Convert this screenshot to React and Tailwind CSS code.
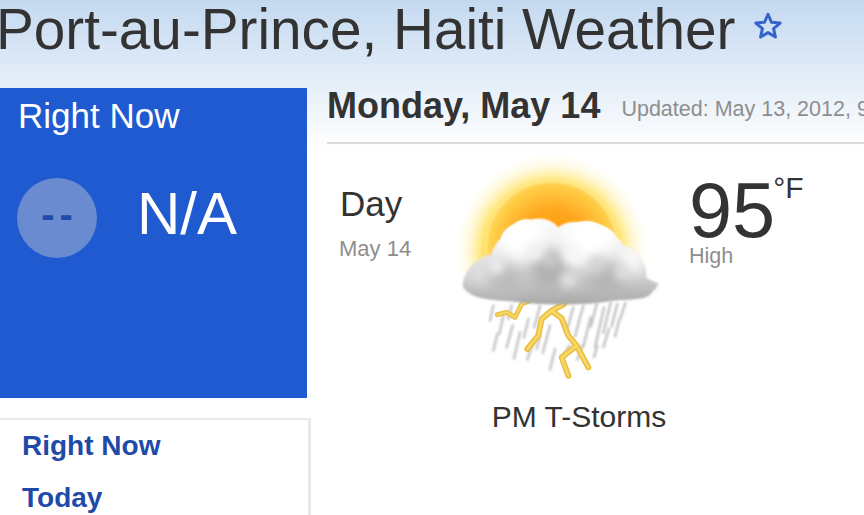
const rain = [
  [160, 470, 150, 515], [190, 500, 178, 555], [215, 470, 205, 510], [218, 530, 200, 595], [172, 555, 160, 605],
  [240, 550, 222, 628], [265, 510, 252, 565], [300, 470, 283, 535], [278, 585, 262, 632], [330, 530, 308, 612],
  [345, 600, 330, 662], [400, 475, 383, 535], [430, 470, 405, 562], [452, 505, 430, 592], [470, 465, 453, 532],
  [492, 475, 465, 595], [512, 460, 490, 552], [532, 465, 515, 532], [507, 540, 490, 594], [556, 462, 540, 512],
  [427, 590, 412, 632], [472, 590, 462, 624], [537, 515, 525, 562], [388, 590, 375, 612], [300, 560, 290, 600],
]

const softPuffs = [
  [240, 262, 70, '#ffffff'], [450, 268, 75, '#ffffff'], [330, 362, 60, '#b0b0b0'], [190, 395, 55, '#bcbcbc'],
  [500, 390, 58, '#b6b6b6'], [575, 335, 36, '#ffffff'], [120, 375, 30, '#e6e6e6'], [340, 258, 34, '#f4f4f4'],
]

const detailPuffs = [
  [400, 318, 32, '#f6f6f6'], [285, 305, 28, '#f2f2f2'], [385, 392, 24, '#e2e2e2'], [170, 350, 24, '#efefef'],
  [470, 345, 26, '#d4d4d4'], [545, 372, 22, '#dedede'], [330, 335, 22, '#cccccc'],
]

function StormIcon() {
  const cloud = 'M68 410 C70 385 88 345 118 332 Q135 318 152 318 C160 300 168 280 182 270 Q190 240 222 226 Q240 208 275 212 Q310 204 340 222 Q348 228 354 236 Q375 218 415 220 Q450 210 482 228 Q520 240 532 268 Q545 275 552 290 Q585 298 598 322 Q618 345 620 388 Q640 398 656 404 Q648 420 636 430 C625 455 570 450 510 456 C440 470 300 470 215 457 C160 452 85 452 68 410 Z'
  const mainBolt = 'M372 465 L335 485 L305 510 L295 560 L262 600 M335 485 L365 508 L385 560 L410 590 L365 625 L385 680 M410 590 L445 655'
  const leftBolt = 'M282 450 L245 465 L225 505 L200 490 L172 497'
  return (
    <svg width="240" height="240" viewBox="0 0 720 720">
      <defs>
        <radialGradient id="glow" gradientUnits="userSpaceOnUse" cx="335" cy="305" r="292">
          <stop offset="0.66" stopColor="#ffd63c" />
          <stop offset="0.76" stopColor="#ffe778" stopOpacity="0.75" />
          <stop offset="0.88" stopColor="#fff3b8" stopOpacity="0.38" />
          <stop offset="1" stopColor="#fff8d8" stopOpacity="0" />
        </radialGradient>
        <radialGradient id="sun" gradientUnits="userSpaceOnUse" cx="340" cy="290" r="215">
          <stop offset="0" stopColor="#ff9400" />
          <stop offset="0.5" stopColor="#ffa820" />
          <stop offset="0.85" stopColor="#ffcf48" />
          <stop offset="1" stopColor="#ffe070" />
        </radialGradient>
        <linearGradient id="cloudFill" x1="0" y1="0" x2="0" y2="1">
          <stop offset="0" stopColor="#ffffff" />
          <stop offset="0.45" stopColor="#e6e6e6" />
          <stop offset="0.8" stopColor="#c0c0c0" />
          <stop offset="1" stopColor="#a8a8a8" />
        </linearGradient>
        <filter id="soft"><feGaussianBlur stdDeviation="2.5" /></filter>
        <filter id="boltBlur"><feGaussianBlur stdDeviation="1.2" /></filter>
        <filter id="puff"><feGaussianBlur stdDeviation="22" /></filter>
        <filter id="detail"><feGaussianBlur stdDeviation="13" /></filter>
        <clipPath id="cloudClip"><path d={cloud} /></clipPath>
        <clipPath id="aboveCloud"><rect x="0" y="0" width="720" height="425" /></clipPath>
      </defs>
      <g clipPath="url(#aboveCloud)">
        <circle cx="335" cy="305" r="292" fill="url(#glow)" />
        <circle cx="335" cy="295" r="197" fill="url(#sun)" stroke="#fff0a8" strokeWidth="4" filter="url(#soft)" />
      </g>
      <g stroke="#c8c8c8" strokeWidth="8" strokeLinecap="round" filter="url(#soft)">
        {rain.map((r, i) => <line key={i} x1={r[0]} y1={r[1]} x2={r[2]} y2={r[3]} />)}
      </g>
      <g fill="none" strokeLinejoin="round" strokeLinecap="round" filter="url(#boltBlur)">
        <path d={mainBolt} stroke="#eabf42" strokeWidth="18" />
        <path d={leftBolt} stroke="#eabf42" strokeWidth="15" />
        <path d={mainBolt} stroke="#f6d768" strokeWidth="8" />
        <path d={leftBolt} stroke="#f6d768" strokeWidth="6" />
      </g>
      <path d={cloud} fill="url(#cloudFill)" filter="url(#soft)" />
      <g clipPath="url(#cloudClip)">
        <g filter="url(#puff)">
          {softPuffs.map((p, i) => <circle key={i} cx={p[0]} cy={p[1]} r={p[2]} fill={p[3]} />)}
        </g>
        <g filter="url(#detail)">
          {detailPuffs.map((p, i) => <circle key={i} cx={p[0]} cy={p[1]} r={p[2]} fill={p[3]} />)}
        </g>
      </g>
    </svg>
  )
}

export default function App() {
  return (
    <div className="w-[864px] h-[515px] overflow-hidden bg-linear-to-b from-[#c4d9f0] to-white to-[150px] font-['Liberation_Sans',Arial,sans-serif] text-[#333333]">

      {/* Title */}
      <div className="h-[88px] flex items-start whitespace-nowrap">
        <h1 className="text-[56.7px] leading-[60px] -ml-[4px]">Port-au-Prince, Haiti Weather</h1>
        <svg className="ml-[17px] mt-[10px]" width="32" height="32" viewBox="0 0 30 30">
          <polygon
            points="15,4 18.2,11.4 26.4,12.2 20.2,17.5 22,25.4 15,21.2 8,25.4 9.8,17.5 3.6,12.2 11.8,11.4"
            fill="none"
            stroke="#3565cc"
            strokeWidth="2.8"
            strokeLinejoin="round"
          />
        </svg>
      </div>

      <div className="flex">
        {/* Left column */}
        <div className="w-[311px] shrink-0">
          <div className="w-[307px] h-[310px] bg-[#1f5ad0] text-white pl-[18px] pt-[8px]">
            <div className="text-[35px] leading-[40px]">Right Now</div>
            <div className="flex items-center mt-[42px] -ml-[1px]">
              <div className="w-[80px] h-[80px] rounded-full bg-[#6a8bd0] flex items-center justify-center text-[#1e4ca8] text-[40px] font-bold tracking-[5px] leading-none pb-[8px] pl-[5px]">
                --
              </div>
              <div className="ml-[40px] text-[60px] leading-[72px] mb-[8px]">N/A</div>
            </div>
          </div>
          <div className="mt-[20px] h-[120px] border-t-[2px] border-r-[3px] border-[#e9e9e9] pl-[22px] pt-[11px] font-bold text-[28px] text-[#1f4aa8]">
            <div className="leading-[30px]">Right Now</div>
            <div className="leading-[30px] mt-[22px]">Today</div>
          </div>
        </div>

        {/* Forecast */}
        <div className="ml-[16px] flex-1 min-w-0">
          <div className="h-[56px] border-b-[2px] border-[#d9d9d9] flex items-baseline whitespace-nowrap overflow-hidden">
            <span className="font-bold text-[36px] leading-[36px]">Monday, May 14</span>
            <span className="ml-[21px] text-[21.5px] text-[#8e8e8e] -translate-y-[2px]">Updated: May 13, 2012, 9</span>
          </div>
          <div className="flex pt-[5px]">
            <div className="w-[113px] pl-[13px] shrink-0 pt-[35px]">
              <div className="text-[35px] leading-[40px]">Day</div>
              <div className="text-[22px] leading-[24px] mt-[13px] -ml-[1px] text-[#8e8e8e]">May 14</div>
            </div>
            <div className="w-[240px] shrink-0 flex flex-col items-center">
              <StormIcon />
              <div className="text-[30px] leading-[32px] mt-[12px] ml-[38px] whitespace-nowrap">PM T-Storms</div>
            </div>
            <div className="ml-[10px] pt-[27px]">
              <div className="flex items-start -ml-[1px]">
                <span className="text-[77.5px] leading-[68px]">95</span>
                <span className="text-[30px] leading-[30px] -ml-[2px] -mt-[3px]">°F</span>
              </div>
              <div className="text-[21.5px] leading-[24px] text-[#8e8e8e] -ml-[1px]">High</div>
            </div>
          </div>
        </div>
      </div>
    </div>
  )
}
